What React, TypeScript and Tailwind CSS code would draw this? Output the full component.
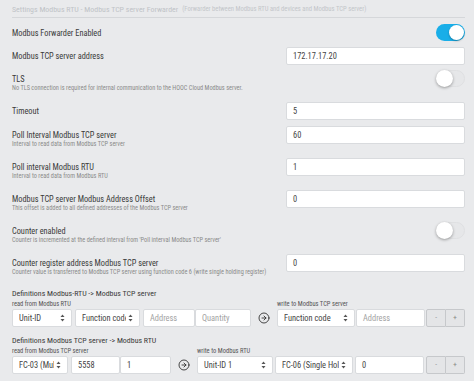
import React from "react";
import { CircleArrowRight } from "lucide-react";

const font = { fontFamily: "'Roboto Condensed', 'DejaVu Sans Condensed', sans-serif" };

function Toggle({ on }: { on: boolean }) {
  return on ? (
    <div className="w-[29px] h-[17px] rounded-full bg-[#19aee8] flex items-center justify-end pr-[1px]">
      <div className="w-[15px] h-[15px] rounded-full bg-white shadow-[0_1px_2px_rgba(0,0,0,0.3)]" />
    </div>
  ) : (
    <div className="w-[29px] h-[17px] rounded-full bg-[#e6e7e9] border border-[#dfe0e2] flex items-center justify-start">
      <div className="w-[17px] h-[17px] -ml-[1px] rounded-full bg-white shadow-[0_1px_3px_rgba(0,0,0,0.35)]" />
    </div>
  );
}

function Input({ value, w, placeholder }: { value?: string; w: string; placeholder?: string }) {
  return (
    <div className={`${w} shrink-0 h-[18px] bg-white border border-[#d9dbde] rounded-[2px] flex items-center px-[6px] text-[8.4px] whitespace-nowrap overflow-hidden ${value ? "text-[#444]" : "text-[#a3a3a3]"}`}>
      {value ?? placeholder}
    </div>
  );
}

function Arrows() {
  return (
    <svg width="5" height="8" viewBox="0 0 5 8" className="shrink-0">
      <path d="M2.5 0.5 L4.5 3 L0.5 3 Z" fill="#555" />
      <path d="M2.5 7.5 L4.5 5 L0.5 5 Z" fill="#555" />
    </svg>
  );
}

function Select({ value, w }: { value: string; w: string }) {
  return (
    <div className={`${w} shrink-0 h-[18px] bg-white border border-[#d9dbde] rounded-[2px] flex items-center justify-between pl-[6px] pr-[6px] gap-[2px] text-[8.4px] text-[#444] overflow-hidden`}>
      <span className="whitespace-nowrap overflow-hidden min-w-0 flex-1">{value}</span>
      <Arrows />
    </div>
  );
}

function PlusMinus() {
  return (
    <div className="flex h-[18px] shrink-0">
      <div className="w-[20px] h-[18px] bg-[#e4e5e7] border border-[#c6c8cb] rounded-l-[2px] flex items-center justify-center text-[7px] text-[#888]">-</div>
      <div className="w-[19px] h-[18px] bg-[#e4e5e7] border border-l-0 border-[#c6c8cb] rounded-r-[2px] flex items-center justify-center text-[8px] text-[#888]">+</div>
    </div>
  );
}

function Row({ h, label, desc, children }: { h: string; label: string; desc?: string; children: React.ReactNode }) {
  return (
    <div className={`${h} flex items-start justify-between`}>
      <div className="flex flex-col min-w-0">
        <div className="h-[18px] flex items-center text-[8.3px] text-[#3a3a3a] whitespace-nowrap">{label}</div>
        {desc && <div className="-mt-[4px] leading-[9px] text-[6.3px] text-[#8a8a8a] whitespace-nowrap">{desc}</div>}
      </div>
      <div className="flex justify-end shrink-0">{children}</div>
    </div>
  );
}

export default function App() {
  return (
    <div className="w-[474px] h-[381px] bg-[#e9eaec] overflow-hidden" style={font}>
      <div className="pl-[12px] pr-[9px] pt-[3px]">
        <div className="h-[15px] flex items-center gap-[4px] whitespace-nowrap border-b border-[#d5d7da]">
          <span className="text-[7.9px] text-[#c0c3c7]">Settings Modbus RTU - Modbus TCP server Forwarder</span>
          <span className="text-[6.6px] text-[#c3c6ca]">(Forwarder between Modbus RTU and devices and Modbus TCP server)</span>
        </div>
        <div className="mt-[6px]">
          <Row h="h-[23px]" label="Modbus Forwarder Enabled"><Toggle on /></Row>
          <Row h="h-[23px]" label="Modbus TCP server address"><Input w="w-[179px]" value="172.17.17.20" /></Row>
          <Row h="h-[32px]" label="TLS" desc="No TLS connection is required for internal communication to the HOOC Cloud Modbus server."><Toggle on={false} /></Row>
          <Row h="h-[24px]" label="Timeout"><Input w="w-[179px]" value="5" /></Row>
          <Row h="h-[32px]" label="Poll Interval Modbus TCP server" desc="Interval to read data from Modbus TCP server"><Input w="w-[179px]" value="60" /></Row>
          <Row h="h-[32px]" label="Poll interval Modbus RTU" desc="Interval to read data from Modbus RTU"><Input w="w-[179px]" value="1" /></Row>
          <Row h="h-[32px]" label="Modbus TCP server Modbus Address Offset" desc="This offset is added to all defined addresses of the Modbus TCP server"><Input w="w-[179px]" value="0" /></Row>
          <Row h="h-[32px]" label="Counter enabled" desc="Counter is incremented at the defined interval from 'Poll interval Modbus TCP server'"><Toggle on={false} /></Row>
          <Row h="h-[32px]" label="Counter register address Modbus TCP server" desc="Counter value is transferred to Modbus TCP server using function code 6 (write single holding register)"><Input w="w-[179px]" value="0" /></Row>

          <div className="mt-[2px] text-[7.9px] text-[#3a3a3a] leading-[12px]">Definitions Modbus-RTU -&gt; Modbus TCP server</div>
          <div className="flex items-end">
            <div className="flex flex-col">
              <div className="text-[6.5px] text-[#555] leading-[9px]">read from Modbus RTU</div>
              <div className="flex gap-[3px]">
                <Select w="w-[60px]" value="Unit-ID" />
                <Select w="w-[65px]" value="Function code" />
                <div className="flex">
                  <Input w="w-[52px]" placeholder="Address" />
                  <Input w="w-[56px]" placeholder="Quantity" />
                </div>
              </div>
            </div>
            <div className="w-[30px] h-[18px] flex items-center justify-center">
              <CircleArrowRight size={12} strokeWidth={1.8} color="#333" />
            </div>
            <div className="flex flex-col">
              <div className="text-[6.5px] text-[#555] leading-[9px]">write to Modbus TCP server</div>
              <div className="flex gap-[1px]">
                <Select w="w-[78px]" value="Function code" />
                <Input w="w-[69px]" placeholder="Address" />
                <PlusMinus />
              </div>
            </div>
          </div>

          <div className="mt-[8px] text-[7.9px] text-[#3a3a3a] leading-[12px]">Definitions Modbus TCP server -&gt; Modbus RTU</div>
          <div className="flex items-end">
            <div className="flex flex-col">
              <div className="text-[6.5px] text-[#555] leading-[9px]">read from Modbus TCP server</div>
              <div className="flex gap-[3px]">
                <Select w="w-[56px]" value="FC-03 (Multiple Holding Registers)" />
                <div className="flex">
                  <Input w="w-[49px]" value="5558" />
                  <Input w="w-[51px]" value="1" />
                </div>
              </div>
            </div>
            <div className="w-[28px] h-[18px] flex items-center justify-center">
              <CircleArrowRight size={12} strokeWidth={1.8} color="#333" />
            </div>
            <div className="flex flex-col">
              <div className="text-[6.5px] text-[#555] leading-[9px]">write to Modbus RTU</div>
              <div className="flex gap-[2px]">
                <Select w="w-[76px]" value="Unit-ID 1" />
                <Select w="w-[78px]" value="FC-06 (Single Holding Register)" />
                <Input w="w-[69px]" value="0" />
                <PlusMinus />
              </div>
            </div>
          </div>
        </div>
      </div>
    </div>
  );
}
